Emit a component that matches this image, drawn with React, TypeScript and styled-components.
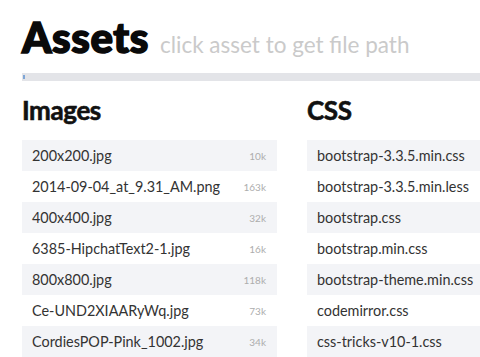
import styled, { createGlobalStyle } from 'styled-components';

const GlobalStyle = createGlobalStyle`
  html, body {
    margin: 0;
    padding: 0;
    background: #fff;
    overflow: hidden;
  }
  body {
    font-family: Lato, "Noto Sans", sans-serif;
    color: #333;
  }
`;

const Page = styled.div`
  width: 480px;
  height: 357px;
  overflow: hidden;
  padding: 14px 0 0 22px;
  box-sizing: border-box;
`;

const Header = styled.div`
  display: flex;
  align-items: baseline;
  gap: 11px;
  white-space: nowrap;
  .title {
    margin: 0;
    font-size: 42px;
    font-weight: 900;
    color: #0a0a0a;
    letter-spacing: 0.6px;
    -webkit-text-stroke: 1.6px #0a0a0a;
    line-height: 46px;
  }
  .hint {
    font-size: 22.5px;
    color: #cacaca;
  }
`;

const Progress = styled.div`
  position: relative;
  margin-top: 13px;
  height: 8px;
  width: 600px;
  background: #e3e4e8;
  &::before {
    content: '';
    position: absolute;
    left: 1px;
    top: 2px;
    width: 2px;
    height: 4px;
    background: #7fa6d6;
  }
`;

const Columns = styled.div`
  display: flex;
  gap: 30px;
  margin-top: 14px;
  width: 600px;
`;

const Column = styled.section`
  width: 255px;
  flex-shrink: 0;
  h2 {
    margin: 0 0 15px 0;
    font-size: 26px;
    font-weight: 700;
    color: #111;
    line-height: 30px;
    letter-spacing: -0.4px;
    -webkit-text-stroke: 0.6px #111;
  }
`;

const Row = styled.div<{ $shaded: boolean }>`
  display: flex;
  justify-content: space-between;
  align-items: center;
  height: 31px;
  padding: 0 11px 0 10px;
  background: ${(p) => (p.$shaded ? '#f3f4f7' : 'transparent')};
  font-size: 14.4px;
  color: #333;
  white-space: nowrap;
  .size {
    font-size: 10px;
    color: #adadad;
  }
`;

const images = [
  ['200x200.jpg', '10k'],
  ['2014-09-04_at_9.31_AM.png', '163k'],
  ['400x400.jpg', '32k'],
  ['6385-HipchatText2-1.jpg', '16k'],
  ['800x800.jpg', '118k'],
  ['Ce-UND2XIAARyWq.jpg', '73k'],
  ['CordiesPOP-Pink_1002.jpg', '34k'],
];

// sizes of the css files sit past the right edge of the window
const css = [
  'bootstrap-3.3.5.min.css',
  'bootstrap-3.3.5.min.less',
  'bootstrap.css',
  'bootstrap.min.css',
  'bootstrap-theme.min.css',
  'codemirror.css',
  'css-tricks-v10-1.css',
];

const App = () => {
  return (
    <>
      <GlobalStyle />
      <Page>
        <Header>
          <h1 className="title">Assets</h1>
          <span className="hint">click asset to get file path</span>
        </Header>
        <Progress />
        <Columns>
          <Column>
            <h2>Images</h2>
            {images.map(([name, size], i) => (
              <Row key={name} $shaded={i % 2 === 0}>
                <span>{name}</span>
                <span className="size">{size}</span>
              </Row>
            ))}
          </Column>
          <Column>
            <h2>CSS</h2>
            {css.map((name, i) => (
              <Row key={name} $shaded={i % 2 === 0}>
                <span>{name}</span>
              </Row>
            ))}
          </Column>
        </Columns>
      </Page>
    </>
  );
};

export default App;
